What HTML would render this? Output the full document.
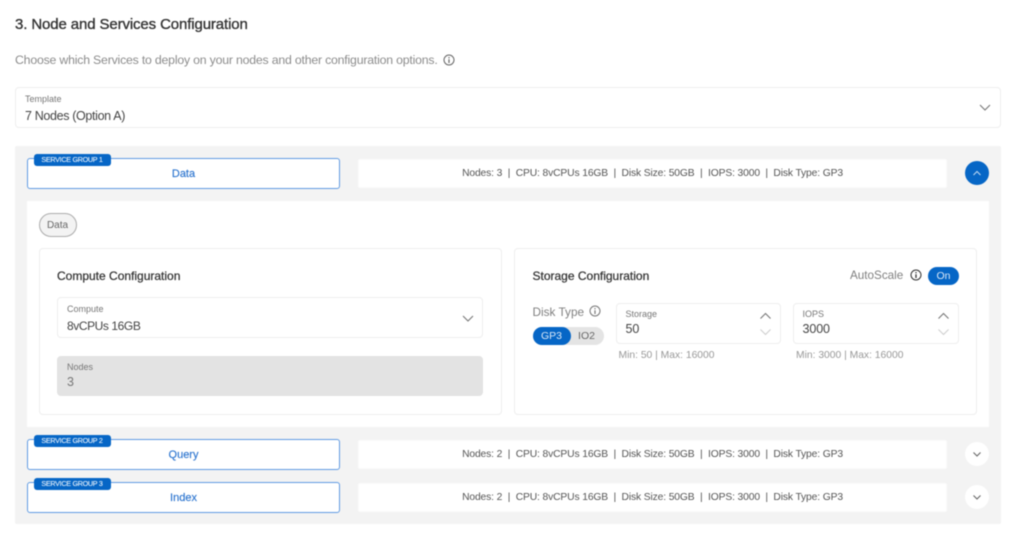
<!DOCTYPE html>
<html><head><meta charset="utf-8">
<style>
html,body{margin:0;padding:0;background:#fff}
#p{position:relative;width:1024px;height:560px;overflow:hidden;background:#fff;font-family:"Liberation Sans",sans-serif;filter:blur(.45px)}
#p div,#p svg{position:absolute;box-sizing:border-box}
.t{white-space:nowrap;line-height:16px}
.box{background:#fff;border:1px solid #eeeeee;border-radius:4px}
.lab{font-size:9px;color:#777}
.val{font-size:12.5px;color:#444;letter-spacing:-.1px}
.h{font-size:12px;color:#333;-webkit-text-stroke:.25px #333;letter-spacing:0}
.g{background:#fff;border:1px solid #629ce2;border-radius:3px;left:27px;width:313px;height:31px}
.bd{background:#0666c6;border-radius:3px;left:33.5px;width:77px;height:12px;color:#e2eefa;font-size:7.2px;letter-spacing:-.3px;line-height:12px;text-align:center;white-space:nowrap;-webkit-text-stroke:.1px #e2eefa}
.gn{left:27px;width:313px;text-align:center;font-size:11px;color:#2b74cf;line-height:16px;-webkit-text-stroke:.15px #2b74cf}
.s{background:#fff;left:358px;width:589px;height:29px;border-radius:2px;border:1px solid #fbfbfb;text-align:center;font-size:10.3px;letter-spacing:-.13px;color:#555;line-height:27px;white-space:pre}
.c{left:965px;width:24px;height:24px;border-radius:50%;background:#fff}
svg{fill:none}
</style></head><body>
<div id="p">
<div class="t" style="left:15px;top:17px;font-size:15px;letter-spacing:-.12px;color:#333;-webkit-text-stroke:.35px #333">3. Node and Services Configuration</div>
<div class="t" style="left:15px;top:52px;font-size:12.3px;letter-spacing:-.2px;color:#8c8c8c">Choose which Services to deploy on your nodes and other configuration options.</div>
<svg style="left:443px;top:54px" width="12" height="12" viewBox="0 0 12 12"><circle cx="6" cy="6" r="5" stroke="#666" stroke-width="1"/><path d="M6 5.3V9M6 3v1.2" stroke="#666" stroke-width="1.2"/></svg>

<div class="box" style="left:15px;top:87px;width:986px;height:41px"></div>
<div class="t lab" style="left:25px;top:91px">Template</div>
<div class="t val" style="left:25px;top:108px;letter-spacing:-.35px">7 Nodes (Option A)</div>
<svg style="left:979px;top:103px" width="12" height="9" viewBox="0 0 12 9"><path d="M1 2l5 5 5-5" stroke="#777" stroke-width="1.1"/></svg>

<div style="left:15px;top:146px;width:986px;height:378px;background:#f3f3f3;border-radius:2px"></div>

<div class="g" style="top:158px"></div>
<div class="bd" style="top:154px">SERVICE GROUP 1</div>
<div class="gn" style="top:166px">Data</div>
<div class="s" style="top:159px">Nodes: 3  |  CPU: 8vCPUs 16GB  |  Disk Size: 50GB  |  IOPS: 3000  |  Disk Type: GP3</div>
<div class="c" style="top:161px;background:#0666c6"></div>
<svg style="left:972px;top:170px" width="10" height="6" viewBox="0 0 10 6"><path d="M1.5 5L5 1.5 8.5 5" stroke="#b9d6f2" stroke-width="1.1"/></svg>

<div style="left:27px;top:201px;width:962px;height:226px;background:#fff"></div>
<div style="left:38.5px;top:213px;width:38px;height:24px;border:1px solid #ababab;border-radius:12px;background:#f3f3f3;font-size:10px;color:#666;text-align:center;line-height:23px">Data</div>

<div class="box" style="left:39px;top:248px;width:463px;height:167px"></div>
<div class="t h" style="left:57px;top:268px">Compute Configuration</div>
<div class="box" style="left:57px;top:297px;width:426px;height:41px"></div>
<div class="t lab" style="left:67px;top:301px">Compute</div>
<div class="t val" style="left:67px;top:318px;font-size:12px;letter-spacing:-.42px">8vCPUs 16GB</div>
<svg style="left:462px;top:314px" width="12" height="9" viewBox="0 0 12 9"><path d="M1 2l5 5 5-5" stroke="#777" stroke-width="1.1"/></svg>
<div style="left:57px;top:356px;width:426px;height:40px;background:#e3e3e3;border-radius:4px"></div>
<div class="t lab" style="left:67px;top:359px">Nodes</div>
<div class="t val" style="left:67px;top:374px;color:#777">3</div>

<div class="box" style="left:514px;top:248px;width:463px;height:167px"></div>
<div class="t h" style="left:532.5px;top:268px">Storage Configuration</div>
<div class="t" style="left:850px;top:268px;font-size:11.7px;color:#808080">AutoScale</div>
<svg style="left:910px;top:269px" width="12" height="12" viewBox="0 0 12 12"><circle cx="6" cy="6" r="5" stroke="#333" stroke-width="1"/><path d="M6 5.3V9M6 3v1.2" stroke="#333" stroke-width="1.3"/></svg>
<div style="left:928px;top:267px;width:31px;height:18px;border-radius:9px;background:#0666c6;color:#dbe9f8;font-size:10.5px;text-align:center;line-height:19px">On</div>

<div class="t" style="left:532.5px;top:304px;font-size:11.8px;color:#808080">Disk Type</div>
<svg style="left:589px;top:305px" width="12" height="12" viewBox="0 0 12 12"><circle cx="6" cy="6" r="5" stroke="#777" stroke-width="1"/><path d="M6 5.3V9M6 3v1.2" stroke="#777" stroke-width="1.2"/></svg>
<div style="left:532.5px;top:327px;width:71.5px;height:18px;border-radius:9px;background:#e4e4e4"></div>
<div style="left:532.5px;top:327px;width:38px;height:18px;border-radius:9px;background:#0666c6;color:#dbe9f8;font-size:10.5px;text-align:center;line-height:19px">GP3</div>
<div style="left:570px;top:327px;width:33px;height:18px;color:#666;font-size:10.5px;text-align:center;line-height:19px">IO2</div>

<div class="box" style="left:616px;top:303px;width:165px;height:41px"></div>
<div class="t lab" style="left:625.5px;top:306px">Storage</div>
<div class="t val" style="left:625.5px;top:321px">50</div>
<svg style="left:759px;top:312px" width="13" height="8" viewBox="0 0 13 8"><path d="M1.5 6.5L6.5 1.5 11.5 6.5" stroke="#777" stroke-width="1.1"/></svg>
<svg style="left:759px;top:328px" width="13" height="8" viewBox="0 0 13 8"><path d="M1.5 1.5L6.5 6.5 11.5 1.5" stroke="#cfcfcf" stroke-width="1.1"/></svg>
<div class="t" style="left:618.5px;top:348px;font-size:10.3px;color:#999">Min: 50 | Max: 16000</div>

<div class="box" style="left:793px;top:303px;width:166px;height:41px"></div>
<div class="t lab" style="left:802.5px;top:306px">IOPS</div>
<div class="t val" style="left:802.5px;top:321px">3000</div>
<svg style="left:937px;top:312px" width="13" height="8" viewBox="0 0 13 8"><path d="M1.5 6.5L6.5 1.5 11.5 6.5" stroke="#777" stroke-width="1.1"/></svg>
<svg style="left:937px;top:328px" width="13" height="8" viewBox="0 0 13 8"><path d="M1.5 1.5L6.5 6.5 11.5 1.5" stroke="#cfcfcf" stroke-width="1.1"/></svg>
<div class="t" style="left:796px;top:348px;font-size:10.3px;color:#999">Min: 3000 | Max: 16000</div>

<div class="g" style="top:439px"></div>
<div class="bd" style="top:435px">SERVICE GROUP 2</div>
<div class="gn" style="top:447px">Query</div>
<div class="s" style="top:440px">Nodes: 2  |  CPU: 8vCPUs 16GB  |  Disk Size: 50GB  |  IOPS: 3000  |  Disk Type: GP3</div>
<div class="c" style="top:442px"></div>
<svg style="left:972px;top:451px" width="10" height="6" viewBox="0 0 10 6"><path d="M1.5 1.5L5 5 8.5 1.5" stroke="#666" stroke-width="1.1"/></svg>

<div class="g" style="top:482px"></div>
<div class="bd" style="top:478px">SERVICE GROUP 3</div>
<div class="gn" style="top:490px">Index</div>
<div class="s" style="top:483px">Nodes: 2  |  CPU: 8vCPUs 16GB  |  Disk Size: 50GB  |  IOPS: 3000  |  Disk Type: GP3</div>
<div class="c" style="top:485px"></div>
<svg style="left:972px;top:494px" width="10" height="6" viewBox="0 0 10 6"><path d="M1.5 1.5L5 5 8.5 1.5" stroke="#666" stroke-width="1.1"/></svg>
</div>
</body></html>
